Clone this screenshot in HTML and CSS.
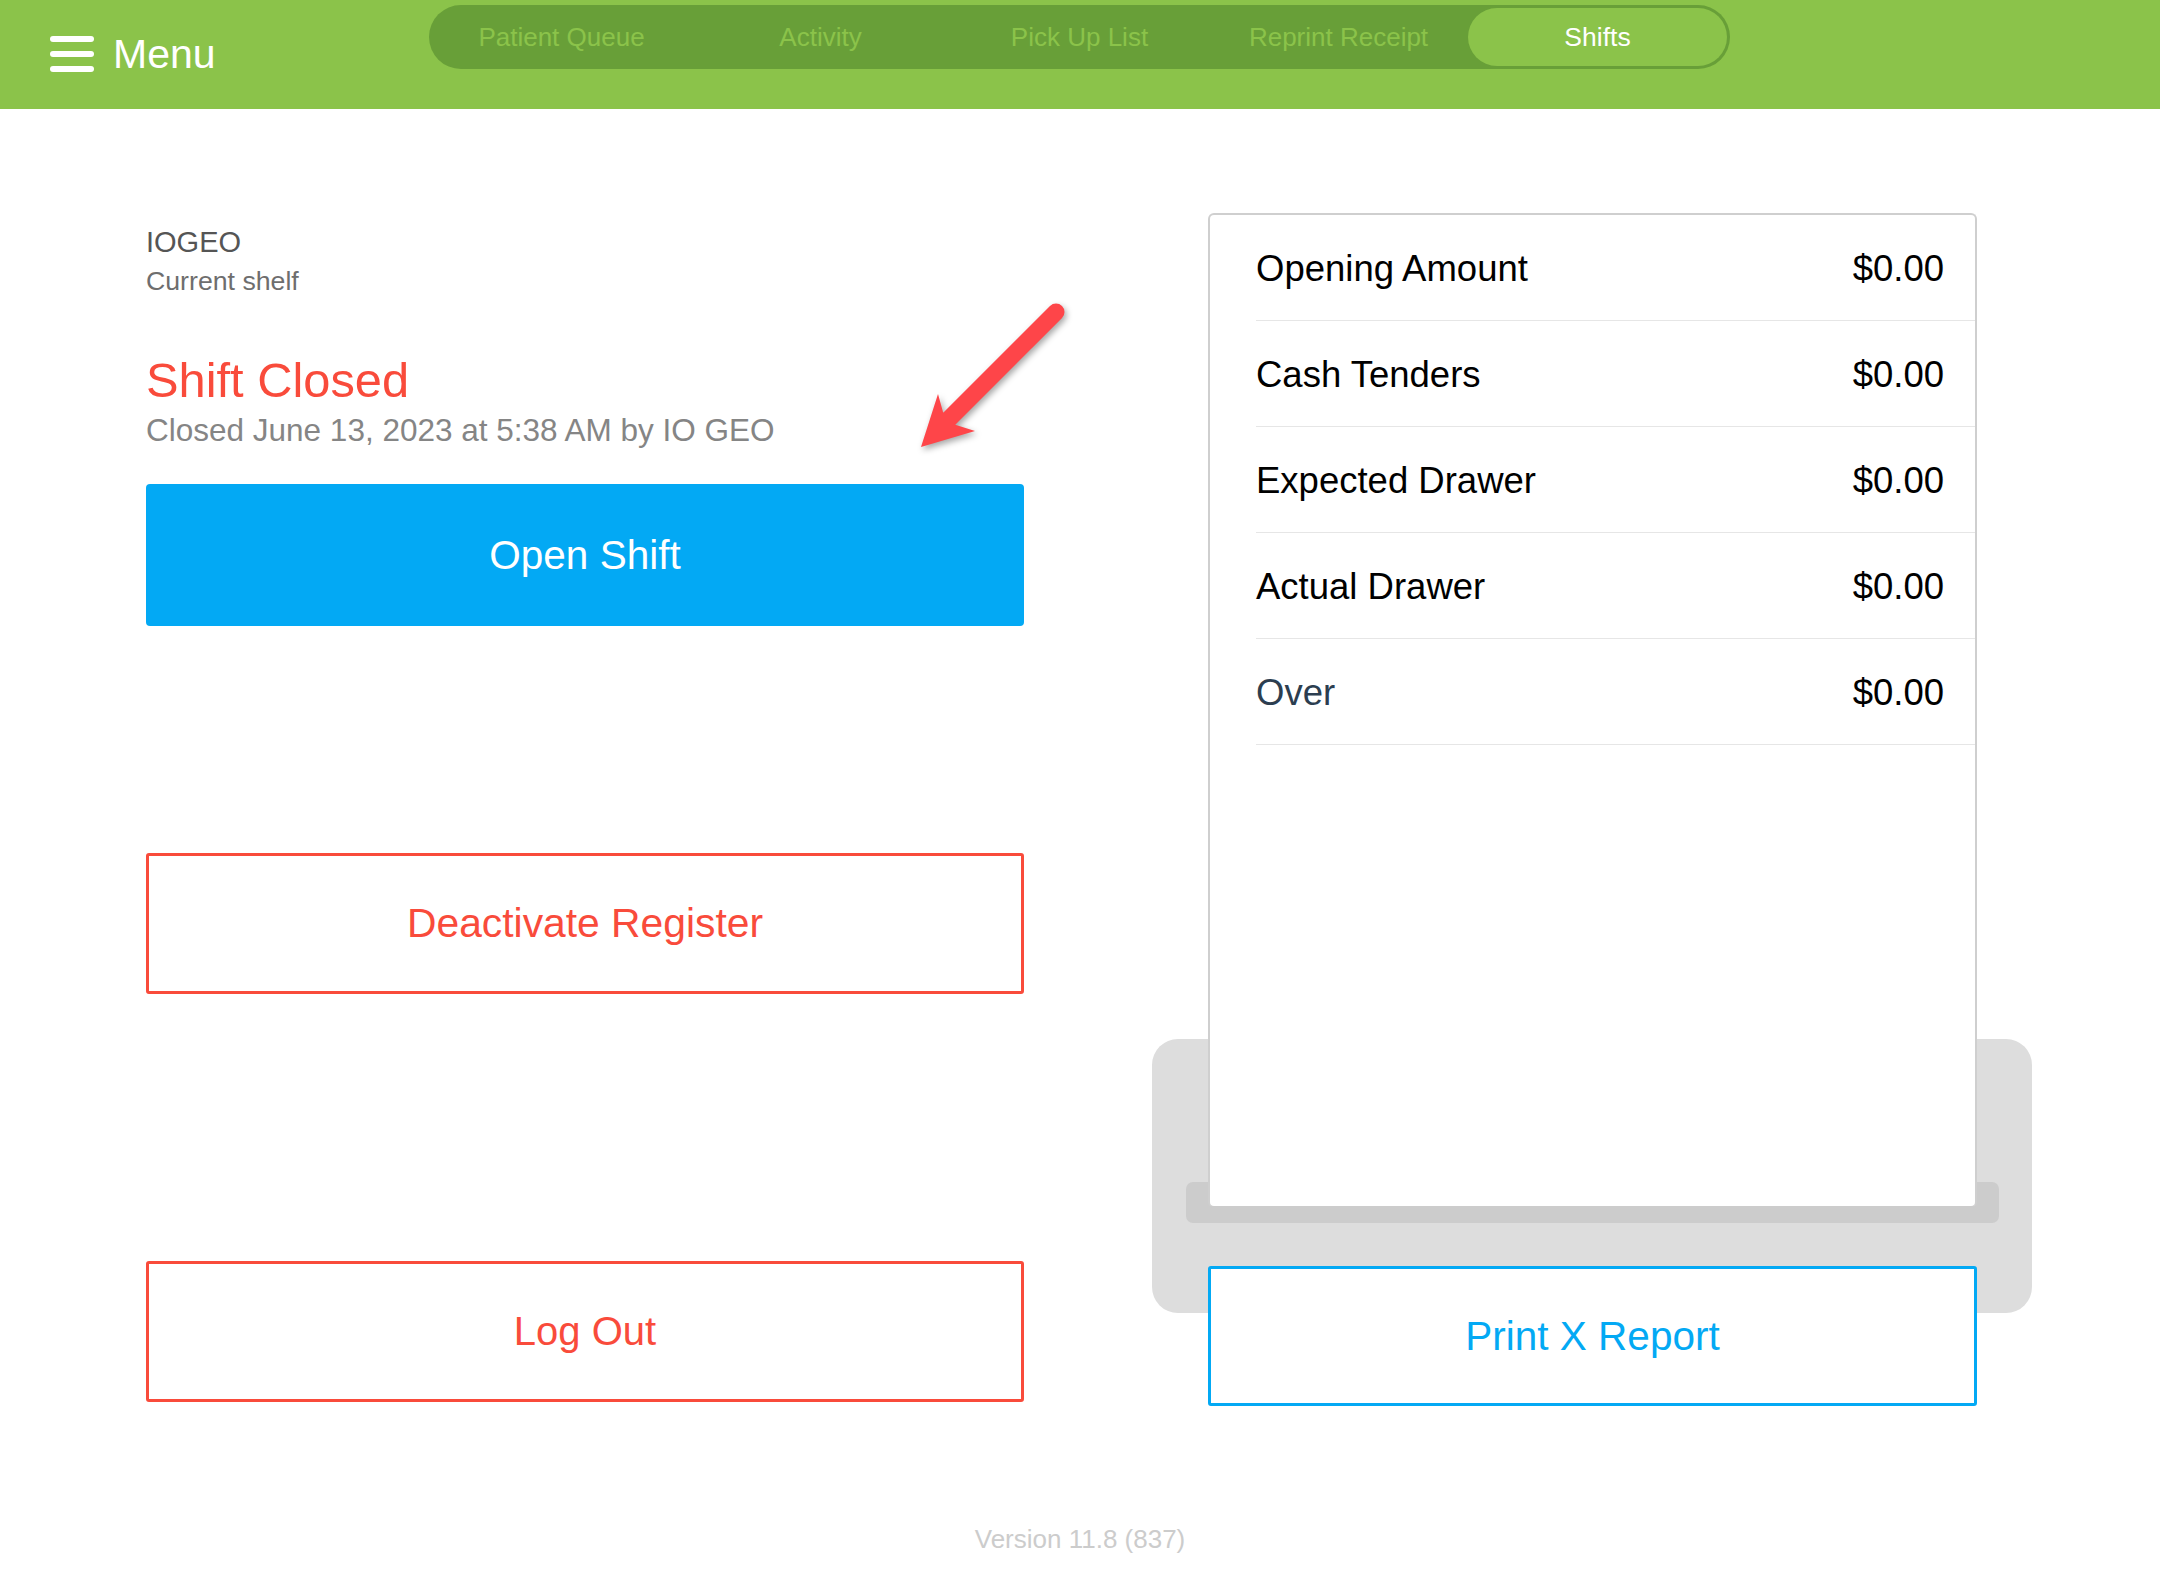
FILE: index.html
```html
<!DOCTYPE html>
<html lang="en">
<head>
<meta charset="utf-8">
<title>Shifts</title>
<link rel="stylesheet" href="styles.css">
</head>
<body>
<header class="topbar">
  <div class="menu">
    <svg class="menu-icon" width="44" height="36" viewBox="0 0 44 36" aria-hidden="true">
      <rect x="0" y="0" width="44" height="6" rx="3"/>
      <rect x="0" y="15" width="44" height="6" rx="3"/>
      <rect x="0" y="30" width="44" height="6" rx="3"/>
    </svg>
    <span class="menu-label">Menu</span>
  </div>
  <nav class="tabs">
    <span class="tab">Patient Queue</span>
    <span class="tab">Activity</span>
    <span class="tab">Pick Up List</span>
    <span class="tab">Reprint Receipt</span>
    <span class="tab active">Shifts</span>
  </nav>
</header>

<main class="shifts">
  <section class="session">
    <div class="store">IOGEO</div>
    <div class="shelf">Current shelf</div>
    <h1 class="status">Shift Closed</h1>
    <p class="status-meta">Closed June 13, 2023 at 5:38 AM by IO GEO</p>
    <button class="btn btn-primary">Open Shift</button>
    <button class="btn btn-danger deactivate">Deactivate Register</button>
    <button class="btn btn-danger logout">Log Out</button>

    <!-- callout arrow pointing at the Open Shift button -->
    <svg class="callout" width="180" height="180" viewBox="0 0 180 180" aria-hidden="true">
      <line x1="156" y1="22" x2="50" y2="128" stroke="#fe4549" stroke-width="17" stroke-linecap="round"/>
      <polygon points="21,157 38,104 43,122 56,135 75,141" fill="#fe4549"/>
    </svg>
  </section>

  <section class="printer">
    <div class="printer-body"></div>
    <div class="printer-slot"></div>
    <div class="receipt">
      <div class="receipt-row"><span class="label">Opening Amount</span><span class="amount">$0.00</span></div>
      <div class="receipt-row"><span class="label">Cash Tenders</span><span class="amount">$0.00</span></div>
      <div class="receipt-row"><span class="label">Expected Drawer</span><span class="amount">$0.00</span></div>
      <div class="receipt-row"><span class="label">Actual Drawer</span><span class="amount">$0.00</span></div>
      <div class="receipt-row"><span class="label label-muted">Over</span><span class="amount">$0.00</span></div>
    </div>
    <button class="btn btn-outline print">Print X Report</button>
  </section>
</main>

<footer class="version">Version 11.8 (837)</footer>
</body>
</html>
```

FILE: styles.css
```css
* {
  box-sizing: border-box;
}

body {
  margin: 0;
  width: 2160px;
  background: #ffffff;
  font-family: "Liberation Sans", Arial, Helvetica, sans-serif;
  color: #000000;
}

/* ---------- top bar ---------- */
.topbar {
  height: 109px;
  background: #8bc34a;
  display: grid;
  grid-template-columns: 429px 1301px 1fr;
  align-items: start;
}

.menu {
  display: flex;
  align-items: center;
  gap: 19px;
  height: 48px;
  margin-top: 30px;
  padding-left: 50px;
}

.menu-icon {
  fill: #ffffff;
  display: block;
}

.menu-label {
  font-size: 41px;
  line-height: 48px;
  color: #ffffff;
}

.tabs {
  margin-top: 5px;
  height: 64px;
  padding: 3px;
  border-radius: 32px;
  background: #689f38;
  display: flex;
}

.tab {
  flex: 1;
  display: flex;
  align-items: center;
  justify-content: center;
  font-size: 26px;
  color: #8bc34a;
  border-radius: 29px;
}

.tab.active {
  background: #8bc34a;
  color: #ffffff;
  font-size: 26.5px;
}

/* ---------- main content ---------- */
.shifts {
  display: flex;
  align-items: flex-start;
  gap: 128px;
  padding-left: 146px;
}

.session {
  position: relative;
  width: 878px;
  padding-top: 116px;
  display: flex;
  flex-direction: column;
}

.store {
  font-size: 29px;
  line-height: 34px;
  color: #555555;
}

.shelf {
  margin-top: 7px;
  font-size: 26.7px;
  line-height: 30px;
  color: #6e6e6e;
}

.status {
  margin: 56px 0 0;
  font-size: 48.8px;
  line-height: 57px;
  font-weight: normal;
  color: #f94b3b;
}

.status-meta {
  margin: 3px 0 0;
  font-size: 31.5px;
  line-height: 37px;
  color: #858585;
}

.btn {
  display: block;
  width: 100%;
  padding: 0;
  font-family: inherit;
  font-size: 40px;
  cursor: pointer;
}

.btn-primary {
  margin-top: 35px;
  height: 142px;
  border: 0;
  border-radius: 4px;
  background: #03a9f4;
  color: #ffffff;
  font-size: 40.5px;
}

.btn-danger {
  height: 141px;
  border: 3px solid #f94b3b;
  border-radius: 3px;
  background: #ffffff;
  color: #f94b3b;
}

.deactivate {
  margin-top: 227px;
  font-size: 40.8px;
}

.logout {
  margin-top: 267px;
}

.callout {
  position: absolute;
  left: 754px;
  top: 181px;
  overflow: visible;
  filter: drop-shadow(2px 3px 3px rgba(0, 0, 0, 0.35));
}

/* ---------- receipt printer ---------- */
.printer {
  margin-top: 104px;
  display: grid;
  grid-template-columns: 34px 22px 769px 22px 33px;
  grid-template-rows: 826px 143px 26px 15px 43px 47px 93px;
}

.printer-body {
  grid-column: 1 / 6;
  grid-row: 2 / 7;
  background: #dddddd;
  border-radius: 26px;
}

.printer-slot {
  grid-column: 2 / 5;
  grid-row: 3 / 5;
  background: #cccccc;
  border-radius: 7px;
}

.receipt {
  grid-column: 3;
  grid-row: 1 / 4;
  z-index: 1;
  background: #ffffff;
  border: 2px solid #cfcfcf;
  border-bottom-color: #cccccc;
  border-radius: 6px;
}

.receipt-row {
  height: 106px;
  margin-left: 46px;
  padding-right: 31px;
  padding-top: 2px;
  border-bottom: 1px solid #e6e6e6;
  display: flex;
  align-items: center;
  justify-content: space-between;
  font-size: 36.5px;
}

.label {
  color: #000000;
}

.label-muted {
  color: #2c3e50;
}

.amount {
  color: #000000;
}

.btn-outline {
  grid-column: 3;
  grid-row: 6 / 8;
  z-index: 1;
  height: 140px;
  border: 3px solid #03a9f4;
  border-radius: 3px;
  background: #ffffff;
  color: #03a9f4;
  font-size: 40.5px;
}

/* ---------- footer ---------- */
.version {
  margin-top: 118px;
  text-align: center;
  font-size: 26px;
  line-height: 30px;
  color: #cccccc;
}
```
